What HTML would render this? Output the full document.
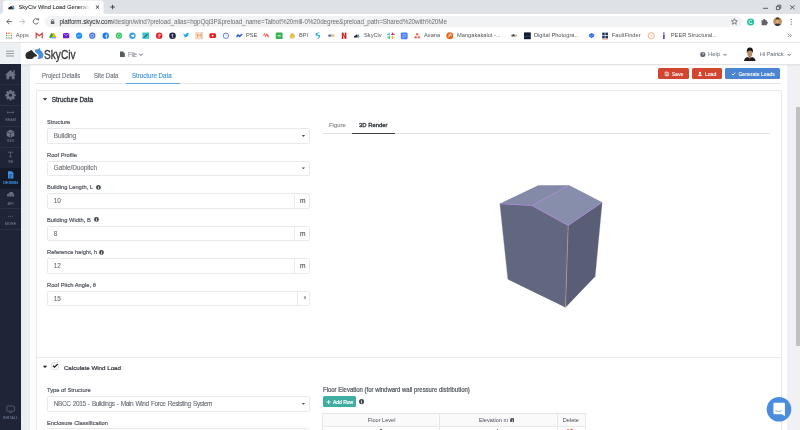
<!DOCTYPE html>
<html><head><meta charset="utf-8">
<style>
*{margin:0;padding:0;box-sizing:border-box}
html,body{width:800px;height:430px;overflow:hidden;background:#fff;font-family:"Liberation Sans",sans-serif}
.a{position:absolute}
.t{position:absolute;white-space:nowrap;line-height:1}
/* chrome */
#tabstrip{left:0;top:0;width:800px;height:14px;background:#dee1e6}
#tab{left:3.5px;top:0.5px;width:100px;height:13.5px;background:#fff;border-radius:4px 4px 0 0}
#toolbar{left:0;top:14px;width:800px;height:15px;background:#fff}
#omni{left:45px;top:16px;width:697px;height:11.3px;background:#f1f3f4;border-radius:6px}
#bmbar{left:0;top:29px;width:800px;height:14px;background:#fff;border-bottom:1px solid #e3e4e6}
.bm{position:absolute;top:32.5px;width:6.5px;height:6.5px;border-radius:50%}
.bmt{position:absolute;top:33px;font-size:5.7px;color:#505458;white-space:nowrap;line-height:1}
/* app */
#hdr{left:0;top:43px;width:800px;height:21px;background:#fff}
#hamb{left:0;top:43px;width:21px;height:21px;background:#eef1f4}
#side{left:0;top:64px;width:21px;height:366px;background:#1f2436}
#gutL{left:21px;top:64px;width:9px;height:366px;background:#eceef1}
#gutR{left:787px;top:64px;width:9px;height:366px;background:#eff1f4}
#sbar{left:796px;top:64px;width:4px;height:366px;background:#f1f1f1}
#thumb{left:796.4px;top:107.2px;width:3.6px;height:238.5px;background:#c1c1c1;border-radius:1px 0 0 1px}
.si{position:absolute;left:0;width:21px;border-bottom:1px solid #2a3044}
.sl{position:absolute;left:0;width:21px;text-align:center;font-size:3.85px;color:#5d6884;line-height:1;letter-spacing:-0.05px;-webkit-text-stroke:0.1px #5d6884}
.lab{position:absolute;font-size:6.15px;color:#50555c;white-space:nowrap;line-height:1;-webkit-text-stroke:0.2px #50555c;transform:scaleX(0.935);transform-origin:0 0}
.inp{position:absolute;left:47.2px;width:263.2px;height:15.6px;border:1px solid #e9eaec;border-radius:1.5px;background:#fff}
.inp span{position:absolute;left:5.6px;top:3.2px;font-size:6.5px;color:#6c7177;line-height:1;white-space:nowrap;letter-spacing:-0.12px;-webkit-text-stroke:0.12px #6c7177}
.caret{position:absolute;left:253.5px;top:5.6px;width:3.4px;height:1.9px;background:#4a4f56;clip-path:polygon(0 0,100% 0,50% 100%)}
.unit{position:absolute;left:246.1px;top:0;width:16.1px;height:13.6px;border-left:1px solid #e9eaec;font-size:6.6px;color:#4f545b;text-align:center;line-height:14.2px;-webkit-text-stroke:0.12px #4f545b}
.unit.deg{left:249.1px;width:13.1px;font-size:7px;line-height:15.5px;padding-left:1px}
.btn{position:absolute;top:67.5px;height:11.3px;border-radius:1.5px;color:#fff;font-size:5.2px;font-weight:bold;line-height:11.3px;white-space:nowrap}
</style></head><body>
<div id="root" style="position:absolute;left:0;top:0;width:800px;height:430px;will-change:transform">
<!-- CHROME TAB STRIP -->
<div id="tabstrip" class="a"></div>
<svg class="a" style="left:0;top:0" width="130" height="15" viewBox="0 0 130 15">
 <path d="M0 14 Q3 14 3 11 V3.5 Q3 0.5 6 0.5 H100.5 Q103.5 0.5 103.5 3.5 V11 Q103.5 14 106.5 14 Z" fill="#fff"/>
 <path d="M95.9 5.5 L99.1 8.7 M99.1 5.5 L95.9 8.7" stroke="#3c4043" stroke-width="1"/>
 <path d="M110.4 7 H114.8 M112.6 4.8 V9.2" stroke="#3c4043" stroke-width="0.95"/>
 <path d="M8.2 9.2 Q8 7 10 6.8 Q11 5.4 12.4 6.4 L13 9.2 Z" fill="#2b2b2b"/>
 <path d="M12.6 5.2 Q14.6 5.6 14.2 7.2 Q15.2 8.4 13.8 9.4 L12.4 9.4 Q13.6 8 12.6 7.2 Z" fill="#4a90d9"/>
</svg>
<div class="t" style="left:18.4px;top:5.3px;font-size:5.75px;color:#3c4043;-webkit-text-stroke:0.12px #3c4043;width:72px;overflow:hidden;-webkit-mask-image:linear-gradient(90deg,#000 84%,transparent)">SkyCiv Wind Load Generator</div>
<svg class="a" style="left:755px;top:0" width="45" height="14" viewBox="0 0 45 14">
 <path d="M8 8.3 H13" stroke="#3c4043" stroke-width="0.8"/>
 <path d="M21.4 6.6 H24.6 V9.6 H21.4 Z" fill="none" stroke="#3c4043" stroke-width="0.8"/>
 <path d="M22.6 6.4 V5.2 H25.8 V8.2 H24.8" fill="none" stroke="#3c4043" stroke-width="0.8"/>
 <path d="M35.2 5.4 L39.6 9.2 M39.6 5.4 L35.2 9.2" stroke="#3c4043" stroke-width="0.8"/>
</svg>
<!-- TOOLBAR -->
<div id="toolbar" class="a"></div>
<div id="omni" class="a"></div>
<svg class="a" style="left:0;top:14px" width="60" height="15" viewBox="0 0 60 15">
 <path d="M12 7.6 H6.8 M9.4 5 L6.8 7.6 L9.4 10.2" fill="none" stroke="#5f6368" stroke-width="0.95"/>
 <path d="M19.6 7.6 H24.8 M22.2 5 L24.8 7.6 L22.2 10.2" fill="none" stroke="#babdc1" stroke-width="0.95"/>
 <path d="M38.2 8.4 A2.6 2.6 0 1 1 37.6 5.6" fill="none" stroke="#5f6368" stroke-width="0.95"/>
 <path d="M36.6 4.6 H39 V7 Z" fill="#5f6368"/>
 <rect x="50.8" y="7.2" width="3.6" height="2.8" rx="0.4" fill="#5f6368"/>
 <path d="M51.6 7.4 V6.4 A1 1 0 0 1 53.6 6.4 V7.4" fill="none" stroke="#5f6368" stroke-width="0.75"/>
</svg>
<div class="t" style="left:59.4px;top:18.8px;font-size:6.3px;letter-spacing:-0.08px;color:#202124">platform.skyciv.com<span style="color:#6c7075">/design/wind?preload_alias=hgpQqi3P&amp;preload_name=Talbot%20mill-0%20degree&amp;preload_path=Shared%20with%20Me</span></div>
<svg class="a" style="left:725px;top:14px" width="75" height="15" viewBox="0 0 75 15">
 <path d="M9.4 4.6 L10.25 6.7 L12.4 6.8 L10.75 8.2 L11.3 10.3 L9.4 9.1 L7.5 10.3 L8.05 8.2 L6.4 6.8 L8.55 6.7 Z" fill="none" stroke="#5f6368" stroke-width="0.75" stroke-linejoin="round"/>
 <circle cx="25.6" cy="7.9" r="3.5" fill="#15c39a"/>
 <path d="M27 6.6 A1.8 1.8 0 1 0 27.2 9 H25.8" fill="none" stroke="#fff" stroke-width="0.8"/>
 <path d="M36.6 6.2 H38.2 Q38.2 4.8 39.2 4.8 Q40.2 4.8 40.2 6.2 H41.8 V7.8 Q43 7.8 43 8.8 Q43 9.8 41.8 9.8 V11.2 H36.6 Z" fill="#5f6368"/>
 <circle cx="52.6" cy="7.6" r="4.4" fill="#c09262"/>
 <path d="M49.6 10.6 Q52.6 8.6 55.6 10.6 Q54.4 12 52.6 12 Q50.8 12 49.6 10.6 Z" fill="#2a3040"/>
 <path d="M50.6 6.6 Q50.8 3.6 52.6 3.6 Q54.6 3.6 54.6 6.6 Q54.2 5 52.6 5.2 Q51 5 50.6 6.6 Z" fill="#3a2a20"/>
 <ellipse cx="52.6" cy="7.6" rx="1.6" ry="2" fill="#d8a880"/>
 <circle cx="66.2" cy="5.4" r="0.6" fill="#5f6368"/><circle cx="66.2" cy="7.8" r="0.6" fill="#5f6368"/><circle cx="66.2" cy="10.2" r="0.6" fill="#5f6368"/>
</svg>
<!-- BOOKMARKS -->
<div id="bmbar" class="a"></div>
<svg class="a" style="left:0;top:29px" width="800" height="14" viewBox="0 29 800 14">
 <g>
  <circle cx="6.6" cy="33.2" r="0.75" fill="#ea4335"/><circle cx="9" cy="33.2" r="0.75" fill="#ea4335"/><circle cx="11.4" cy="33.2" r="0.75" fill="#fbbc04"/>
  <circle cx="6.6" cy="35.6" r="0.75" fill="#34a853"/><circle cx="9" cy="35.6" r="0.75" fill="#fbbc04"/><circle cx="11.4" cy="35.6" r="0.75" fill="#4285f4"/>
  <circle cx="6.6" cy="38" r="0.75" fill="#4285f4"/><circle cx="9" cy="38" r="0.75" fill="#34a853"/><circle cx="11.4" cy="38" r="0.75" fill="#ea4335"/>
 </g>
 <path d="M36.2 38.4 V33.2 L39.2 35.8 L42.2 33.2 V38.4" fill="none" stroke="#c5443a" stroke-width="1.2"/>
 <path d="M49.2 37.2 L51.6 33 H54 L56.4 37.2 Z" fill="#f4b400"/>
 <path d="M49.2 37.2 L51.6 33 L52.8 35 L51 38.3 Z" fill="#0f9d58"/>
 <path d="M51 38.3 L52.2 37.2 H56.4 L55.8 38.3 Z" fill="#4285f4"/>
 <rect x="63" y="33" width="6.2" height="5.2" rx="0.6" fill="#6b1fd8"/><path d="M63.2 33.4 L66.1 35.6 L69 33.4" fill="none" stroke="#fff" stroke-width="0.5"/>
 <circle cx="79.1" cy="35.7" r="3.1" fill="#1c8bf5"/><path d="M77.3 36.6 L78.6 35 L79.6 35.8 L80.9 34.6" fill="none" stroke="#fff" stroke-width="0.55"/>
 <circle cx="92.3" cy="35.7" r="3.1" fill="#3d6ee6"/><rect x="90.9" y="34.3" width="2.8" height="2.8" rx="0.4" fill="none" stroke="#fff" stroke-width="0.55"/>
 <circle cx="105.7" cy="35.7" r="3.2" fill="#1877f2"/><path d="M106.3 38.9 V35.4 Q106.3 34.2 107.4 34.2 M105 36 H107.4" fill="none" stroke="#fff" stroke-width="0.75"/>
 <circle cx="118.9" cy="35.7" r="3.1" fill="#2cc45e"/><circle cx="118.9" cy="35.7" r="1.6" fill="none" stroke="#fff" stroke-width="0.5"/>
 <circle cx="132.4" cy="35.7" r="3.2" fill="#3aa0e2"/><path d="M130.6 35.6 L134.4 34.2 L133.6 37.4 Z" fill="#fff"/>
 <rect x="142.4" y="32.5" width="6.6" height="6.4" fill="#3cc6ce"/><path d="M143.8 37.8 L147.8 33.8" stroke="#222" stroke-width="0.9"/>
 <circle cx="159.2" cy="35.7" r="3.2" fill="#e0262d"/><path d="M158.8 38.4 L159.6 34.6 M158.4 35.8 Q158.6 33.6 160.2 34.2 Q161 35.4 159.4 36.4" fill="none" stroke="#fff" stroke-width="0.55"/>
 <circle cx="172.5" cy="35.7" r="3.3" fill="#1b2442"/><path d="M172.4 33.8 V37 Q172.4 37.8 173.4 37.6 M171.4 35 H173.4" fill="none" stroke="#fff" stroke-width="0.65"/>
 <path d="M183.2 37.4 Q185 38 186.8 36.8 Q188.6 35.4 188.6 33.6 L189.4 33 L188.4 33.2 Q187.4 32.4 186.4 33.4 Q186 34 186.2 34.6 Q184.4 34.6 183.4 33.4 Q183 35 184.4 35.6 L183.8 35.6 Q184 36.6 185.2 36.8 Q184.4 37.4 183.2 37.4 Z" fill="#1da1f2"/>
 <rect x="195.8" y="32.4" width="7" height="6.6" fill="#f7e3d2" stroke="#e8b896" stroke-width="0.4"/><path d="M197.4 37.8 V33.8 L199.3 35.8 L201.2 33.8 V37.8" fill="none" stroke="#e07a30" stroke-width="0.6"/>
 <rect x="209.4" y="33.3" width="6.6" height="4.8" rx="1.3" fill="#e62117"/><path d="M211.9 34.6 L214 35.7 L211.9 36.8 Z" fill="#fff"/>
 <circle cx="225.9" cy="35.7" r="2.7" fill="none" stroke="#5a72b6" stroke-width="0.9"/><path d="M224.6 34.6 Q226.8 34 227.4 36.4" fill="none" stroke="#a8b4d8" stroke-width="0.6"/>
 <path d="M236 36.2 L238 33.8 L239.6 35.2 L241.8 33.4 L242.6 34.6 L239.8 37.6 L238.2 36.2 L236.8 37.6 Z" fill="#2f67c9"/>
 <path d="M263 35.8 L264.6 33.4 L265.4 36.8 L266.6 34.2 L267.4 36 H269.2 M266.8 33.4 L268.6 37.6" fill="none" stroke="#e03838" stroke-width="0.7"/>
 <rect x="275.8" y="32.4" width="6.8" height="6.6" rx="0.5" fill="#38b456"/><rect x="277.6" y="35" width="3.2" height="1.4" fill="#a8e6b8"/>
 <path d="M290 38.4 Q289.4 35.6 290.6 33.8 Q292 32.2 293.4 33.4 Q295.6 35 295 37.6 Q293.6 39 290 38.4 Z" fill="#e8c45a"/><path d="M291.6 35 Q292.6 34.4 293.4 35.6" fill="none" stroke="#b08a20" stroke-width="0.5"/>
 <path d="M317.8 32.6 Q315 33.4 315.6 35.6 Q318.8 35.6 318.8 37 Q318.6 38.4 315.6 39 Q319.8 38.6 320.2 36.2 Q320 34.6 317 34.6 Q317 33.4 320 32.8 Z" fill="#22a8d8"/>
 <rect x="328" y="34.3" width="6.4" height="2.8" fill="#c6cdf0"/><rect x="331.6" y="34.6" width="2.4" height="2" fill="#f2d040"/><rect x="328.6" y="34.8" width="2.4" height="1.6" fill="#4a5ab8"/>
 <path d="M341.8 39 V32.4 H343.3 L344.8 36.4 V32.4 H346.4 V39 H344.9 L343.3 35 V39 Z" fill="#d81f26"/>
 <path d="M354 37.6 Q353.6 35.8 355.4 35.6 Q356 34.2 357.4 34.8 L357.8 37.6 Z" fill="#2b2b2b"/><path d="M357.6 34 Q359.4 34.4 359.2 35.8 Q360.2 37 358.6 37.8 L357.8 37.8 Q358.8 36.6 357.8 35.8 Z" fill="#4a90d9"/>
 <g stroke-width="1.1" stroke-linecap="round"><path d="M389.2 33 V35.2" stroke="#36c5f0"/><path d="M387.6 37 H389.8" stroke="#2eb67d"/><path d="M392.4 38.4 V36.2" stroke="#ecb22e"/><path d="M394 34.4 H391.8" stroke="#e01e5a"/><path d="M387.6 34.4 H389" stroke="#36c5f0"/><path d="M392.4 33 V34.4" stroke="#e01e5a"/><path d="M394 37 H392.6" stroke="#ecb22e"/><path d="M389.2 38.4 V37" stroke="#2eb67d"/></g>
 <rect x="400.8" y="32.4" width="6.8" height="6.8" rx="1.2" fill="#4d7ef2"/><path d="M402.2 34.6 H406.2 M402.2 36.2 H406.2 M402.2 37.8 H404.6" stroke="#c8d6ff" stroke-width="0.5"/>
 <circle cx="417.2" cy="34.2" r="1.25" fill="#f06a6a"/><circle cx="415.6" cy="37.2" r="1.25" fill="#f06a6a"/><circle cx="418.8" cy="37.2" r="1.25" fill="#f06a6a"/>
 <circle cx="449.8" cy="35.7" r="3.5" fill="#e26a1e"/><path d="M448.2 37.6 L450.4 33.6 L451.4 35.6 M448.6 35.2 H451.6" fill="none" stroke="#fff" stroke-width="0.6"/>
 <rect x="511" y="34.4" width="6.2" height="2.4" rx="0.3" fill="#fff"/><path d="M511.6 34.6 V36.6 M512.6 34.6 V36.6 L513.4 35.6 L514.2 36.6 V34.6 M515 34.6 V36.6 M516.2 34.6 V36.6" stroke="#333" stroke-width="0.5"/>
 <rect x="524" y="32.4" width="6.8" height="6.8" fill="#0f1b30"/><path d="M524.4 37 Q527 35.4 530.4 36.2" fill="none" stroke="#3a5a8a" stroke-width="0.8"/>
 <path d="M588.8 34.6 L591.6 33 L594.4 34.6 L594 36.6 L591.6 38.2 L589.2 36.6 Z" fill="#3d6ee8"/><path d="M589.6 34.8 L591.6 36 L593.6 34.8" fill="none" stroke="#9ab8ff" stroke-width="0.4"/>
 <rect x="602.2" y="32.6" width="2.6" height="2.6" fill="#233a5e"/><rect x="605.4" y="32.6" width="2.6" height="2.6" fill="#233a5e"/><rect x="602.2" y="35.8" width="2.6" height="2.6" fill="#233a5e"/><rect x="605.4" y="35.8" width="2.6" height="2.6" fill="#233a5e"/><rect x="602.2" y="38.8" width="5.8" height="0.5" fill="#e04a4a"/>
 <circle cx="651.2" cy="35.7" r="3.1" fill="none" stroke="#f0a06a" stroke-width="0.8"/><path d="M650.6 34.2 L652 35.8 L650.8 37.2" fill="none" stroke="#f0a06a" stroke-width="0.6"/>
 <rect x="663.2" y="34.4" width="1.4" height="4.6" fill="#3c1ec8"/><circle cx="663.9" cy="33" r="0.75" fill="#3c1ec8"/>
 <path d="M787.8 33.8 L789.4 35.4 L787.8 37 M790 33.8 L791.6 35.4 L790 37" fill="none" stroke="#5f6368" stroke-width="0.65"/>
</svg>
<div class="bmt" style="left:15.8px">Apps</div>
<div class="bmt" style="left:246px">PSE</div>
<div class="bmt" style="left:298.9px">BPI</div>
<div class="bmt" style="left:364px">SkyCiv</div>
<div class="bmt" style="left:424px">Asana</div>
<div class="bmt" style="left:457px">Mangakakalot -...</div>
<div class="bmt" style="left:534px">Digital Photogra...</div>
<div class="bmt" style="left:611.8px">FaultFinder</div>
<div class="bmt" style="left:670.8px">PEER Structural...</div>

<!-- APP HEADER -->
<div id="hdr" class="a"></div>
<div id="hamb" class="a"></div>
<svg class="a" style="left:0;top:43px" width="150" height="21" viewBox="0 43 150 21">
 <path d="M6 51.2 H14 M6 53.6 H14 M6 56 H14" stroke="#767c86" stroke-width="0.75"/>
 <path d="M25.4 55.6 Q25.5 52.4 28.6 51.4 L31.2 50 Q32.6 50.4 33.2 52 L37.2 55.6 Q36.6 56.8 35.2 56.6 L33.9 56.9 Q33.4 58.9 31.2 58.9 L27.6 58.9 Q25.4 58.5 25.4 55.6 Z" fill="#2b2b2b"/>
 <path d="M34.8 50.4 Q35.4 49 37.4 49.4 L39.4 48 Q40.4 49 40.3 50.3 Q43.6 52.4 43.4 55.6 Q43.2 58.9 39.2 58.9 L37.6 58.9 Q38.8 57.4 38.6 55.6 Q38.2 53.8 36.4 53 Q34.8 52.2 34.8 50.4 Z" fill="#4a90d9"/>
 <path d="M120 51.6 H123 L124.8 53.4 V57.1 H120 Z" fill="#555b63"/>
 <path d="M139.3 53.8 L141 55.5 L142.7 53.8" fill="none" stroke="#5c626a" stroke-width="1"/>
</svg>
<div class="t" style="left:44px;top:48px;font-size:13px;color:#383838;-webkit-text-stroke:0.35px #383838;transform:scaleX(0.78);transform-origin:0 0">SkyCiv</div>
<div class="t" style="left:127.9px;top:52px;font-size:6.3px;color:#7d838b;letter-spacing:-0.35px">File</div>
<svg class="a" style="left:695px;top:46px" width="100" height="16" viewBox="695 46 100 16">
 <circle cx="702.8" cy="54.4" r="2.55" fill="#5c636d"/>
 <path d="M701.9 53.6 Q701.9 52.6 702.8 52.6 Q703.8 52.6 703.8 53.5 Q703.8 54.2 702.9 54.6 V55.2" fill="none" stroke="#fff" stroke-width="0.6"/>
 <circle cx="702.9" cy="56.1" r="0.35" fill="#fff"/>
 <path d="M723.4 53.9 L725 55.5 L726.6 53.9" fill="none" stroke="#5c626a" stroke-width="1"/>
 <path d="M787.6 53.9 L789.2 55.5 L790.8 53.9" fill="none" stroke="#5c626a" stroke-width="1"/>
</svg>
<div class="t" style="left:708px;top:52.2px;font-size:5.8px;color:#80868d;-webkit-text-stroke:0.1px #80868d">Help</div>
<svg class="a" style="left:740px;top:45px" width="20" height="18" viewBox="740 45 20 18">
 <path d="M744 61 Q744.5 57.6 747.6 57 L749.8 58.2 L752 57 Q755 57.6 755.6 61 Z" fill="#1d1a1c"/>
 <path d="M749 57.4 L749.8 60.6 L750.6 57.4 Z" fill="#8a3030"/>
 <ellipse cx="749.8" cy="53.6" rx="2.5" ry="3.3" fill="#b98a6a"/>
 <path d="M746.8 53 Q746.4 47.6 749.9 47.6 Q753.4 47.6 753 53 Q752.4 50.6 749.9 50.4 Q747.4 50.6 746.8 53 Z" fill="#1a1414"/>
 <rect x="748.6" y="56.2" width="2.4" height="1.4" fill="#a07058"/>
</svg>
<div class="t" style="left:759.8px;top:52.2px;font-size:5.8px;color:#80868d;letter-spacing:-0.1px;-webkit-text-stroke:0.1px #80868d">Hi Patrick</div>
<!-- SIDEBAR -->
<div id="side" class="a"></div>
<div class="a" style="left:0;top:83.5px;width:21px;height:0.7px;background:#2b3145"></div>
<div class="a" style="left:0;top:104.5px;width:21px;height:0.7px;background:#2b3145"></div>
<div class="a" style="left:0;top:125.5px;width:21px;height:0.7px;background:#2b3145"></div>
<div class="a" style="left:0;top:146.5px;width:21px;height:0.7px;background:#2b3145"></div>
<div class="a" style="left:0;top:167.5px;width:21px;height:0.7px;background:#2b3145"></div>
<div class="a" style="left:0;top:188.0px;width:21px;height:0.7px;background:#2b3145"></div>
<div class="a" style="left:0;top:208.0px;width:21px;height:0.7px;background:#2b3145"></div>
<div class="a" style="left:0;top:228.5px;width:21px;height:0.7px;background:#2b3145"></div>
<div class="a" style="left:0;top:168px;width:21px;height:20.5px;background:#151a29"></div>
<svg class="a" style="left:0;top:64px" width="21" height="170" viewBox="0 0 21 170">
 <!-- home -->
 <path d="M5 11 L10.5 6 L16 11 L14.6 11 L14.6 15.2 L11.8 15.2 L11.8 12.6 L9.2 12.6 L9.2 15.2 L6.4 15.2 L6.4 11 Z" fill="#6d7384"/>
 <rect x="13.4" y="6" width="1.3" height="3" fill="#6d7384"/>
 <!-- gear -->
 <g transform="translate(10.5,31.2)">
  <circle r="3.9" fill="#6d7384"/>
  <g fill="#6d7384">
   <rect x="-1.1" y="-5.2" width="2.2" height="10.4"/>
   <rect x="-5.2" y="-1.1" width="10.4" height="2.2"/>
   <rect x="-1.1" y="-5.2" width="2.2" height="10.4" transform="rotate(45)"/>
   <rect x="-1.1" y="-5.2" width="2.2" height="10.4" transform="rotate(-45)"/>
  </g>
  <circle r="1.6" fill="#1f2436"/>
 </g>
 <!-- beam arrow -->
 <path d="M7.2 48.4 H13.8" stroke="#6d7384" stroke-width="0.7"/>
 <path d="M8.2 47.3 L7 48.4 L8.2 49.5 M12.8 47.3 L14 48.4 L12.8 49.5" stroke="#6d7384" stroke-width="0.6" fill="none"/>
 <!-- cube -->
 <path d="M10.5 65.8 L14.3 67.6 L14.3 72 L10.5 73.8 L6.7 72 L6.7 67.6 Z" fill="#6d7384"/>
 <path d="M6.7 67.6 L10.5 69.4 L14.3 67.6 M10.5 69.4 V73.8" stroke="#1f2436" stroke-width="0.6" fill="none"/>
 <!-- T -->
 <path d="M7.8 88.2 H13.2 M10.5 88.2 V92.8 M9.3 92.8 H11.7" stroke="#6d7384" stroke-width="0.7" fill="none"/>
 <!-- design doc -->
 <path d="M8 107.2 H11.6 L13.4 109 V114.6 H8 Z" fill="#3b8fe5"/>
 <path d="M9 110.6 H12.2 M9 112 H12.2 M9 113.3 H11" stroke="#151a29" stroke-width="0.45"/>
 <!-- cloud api -->
 <path d="M7 131.6 Q7 129.4 9 129.6 Q9.8 127.4 11.8 128 Q13.8 128.4 13.6 130.2 Q14.8 130.8 14 132.4 H7.6 Z" fill="#6d7384"/>
 <path d="M9.6 130.4 L8.6 131.1 L9.6 131.8 M11.4 130.4 L12.4 131.1 L11.4 131.8" stroke="#1f2436" stroke-width="0.5" fill="none"/>
 <!-- dots -->
 <circle cx="8.7" cy="152.3" r="0.55" fill="#6d7384"/><circle cx="10.5" cy="152.3" r="0.55" fill="#6d7384"/><circle cx="12.3" cy="152.3" r="0.55" fill="#6d7384"/>
</svg>
<div class="sl" style="top:119.40px;color:#6d7384">BEAM</div>
<div class="sl" style="top:139.80px;color:#6d7384">S3D</div>
<div class="sl" style="top:160.60px;color:#6d7384">SB</div>
<div class="sl" style="top:181.80px;color:#3f95ee;-webkit-text-stroke:0.15px #3f95ee">DESIGN</div>
<div class="sl" style="top:202.60px;color:#6d7384">API</div>
<div class="sl" style="top:223.30px;color:#6d7384">MORE</div>
<svg class="a" style="left:0;top:400px" width="21" height="30" viewBox="0 0 21 30">
 <rect x="6.8" y="6" width="7.6" height="5.2" rx="0.6" fill="none" stroke="#5d6478" stroke-width="0.8"/>
 <path d="M9.2 12.6 H12" stroke="#5d6478" stroke-width="0.7"/>
</svg>
<div class="sl" style="top:415.60px;color:#66718c;font-size:4px;-webkit-text-stroke:0.1px #66718c">INSTALL</div>
<div id="gutL" class="a"></div>
<div id="gutR" class="a"></div>
<div id="sbar" class="a"></div>
<div id="thumb" class="a"></div>
<!-- CONTENT -->

<div class="a" style="left:30px;top:64px;width:757px;height:366px;background:#fff"></div>
<div class="t" style="left:42px;top:72.9px;font-size:6.6px;transform:scaleX(0.9);transform-origin:0 0;color:#6d7279;-webkit-text-stroke:0.15px #6d7279">Project Details</div>
<div class="t" style="left:94.4px;top:72.9px;font-size:6.6px;transform:scaleX(0.9);transform-origin:0 0;color:#6d7279;-webkit-text-stroke:0.15px #6d7279">Site Data</div>
<div class="t" style="left:132.4px;top:72.9px;font-size:6.6px;transform:scaleX(0.93);transform-origin:0 0;color:#4597df;-webkit-text-stroke:0.15px #4597df">Structure Data</div>
<div class="a" style="left:35px;top:83px;width:746px;height:1px;background:#e6e8eb"></div>
<div class="a" style="left:125.6px;top:82.6px;width:54.4px;height:1.2px;background:#5aa8ea"></div>
<div class="btn" style="left:658.1px;width:30.6px;background:#d3452f"></div>
<div class="btn" style="left:691.7px;width:30.5px;background:#d3452f"></div>
<div class="btn" style="left:725px;width:55px;background:#4a84d2"></div>
<svg class="a" style="left:660px;top:68px" width="120" height="11" viewBox="660 68 120 11">
 <path d="M665.1 72 H667.6 L668.6 73 V75.8 H665.1 Z" fill="none" stroke="#fff" stroke-width="0.6"/>
 <path d="M665.9 72 V73.2 H667.4 V72" fill="none" stroke="#fff" stroke-width="0.5"/>
 <rect x="665.8" y="74.4" width="2.1" height="1.2" fill="#fff"/>
 <circle cx="700" cy="72.9" r="1.05" fill="#fff"/>
 <path d="M698 75.9 Q698.2 74.2 700 74.2 Q701.8 74.2 702 75.9 Z" fill="#fff"/>
 <path d="M731.9 73.9 L733.1 75.1 L735.3 72.6" fill="none" stroke="#fff" stroke-width="0.85"/>
</svg>
<div class="t" style="left:671.7px;top:71.6px;font-size:5.15px;color:#fff;-webkit-text-stroke:0.1px #fff">Save</div>
<div class="t" style="left:704.9px;top:71.6px;font-size:5.15px;color:#fff;-webkit-text-stroke:0.1px #fff">Load</div>
<div class="t" style="left:738.4px;top:71.6px;font-size:5.15px;color:#fff;-webkit-text-stroke:0.1px #fff;letter-spacing:-0.03px">Generate Loads</div>
<!-- panel -->
<div class="a" style="left:35.5px;top:89.5px;width:746px;height:360px;border:1px solid #e7e9ec;border-radius:2px"></div>
<svg class="a" style="left:40px;top:95px" width="10" height="8"><path d="M3.3 3.4 H6.7 L5 5.2 Z" fill="#1e1e1e" stroke="#1e1e1e" stroke-width="0.5" stroke-linejoin="round"/></svg>
<div class="t" style="left:51.8px;top:96.5px;font-size:6.4px;color:#2f343c;-webkit-text-stroke:0.28px #2f343c">Structure Data</div>

<div class="lab" style="left:47.15px;top:119.20px">Structure</div>
<div class="inp" style="top:128.40px"><span style="top:3.45px">Building</span><i class="caret"></i></div>
<div class="lab" style="left:47.15px;top:151.67px">Roof Profile</div>
<div class="inp" style="top:160.85px"><span style="top:3.60px">Gable/Duopitch</span><i class="caret"></i></div>
<div class="lab" style="left:47.15px;top:184.14px">Building Length, L</div>
<svg style="position:absolute;left:95.6px;top:184.65px" width="5" height="5" viewBox="0 0 5 5"><circle cx="2.45" cy="2.45" r="2.4" fill="#454b53"/><rect x="2.05" y="2.1" width="0.8" height="1.8" fill="#fff"/><circle cx="2.45" cy="1.3" r="0.42" fill="#fff"/></svg>
<div class="inp" style="top:193.30px"><span style="top:3.75px">10</span><div class="unit">m</div></div>
<div class="lab" style="left:47.15px;top:216.61px">Building Width, B</div>
<svg style="position:absolute;left:93.8px;top:217.05px" width="5" height="5" viewBox="0 0 5 5"><circle cx="2.45" cy="2.45" r="2.4" fill="#454b53"/><rect x="2.05" y="2.1" width="0.8" height="1.8" fill="#fff"/><circle cx="2.45" cy="1.3" r="0.42" fill="#fff"/></svg>
<div class="inp" style="top:225.75px"><span style="top:3.90px">8</span><div class="unit">m</div></div>
<div class="lab" style="left:47.15px;top:249.08px">Reference height, h</div>
<svg style="position:absolute;left:98.9px;top:249.75px" width="5" height="5" viewBox="0 0 5 5"><circle cx="2.45" cy="2.45" r="2.4" fill="#454b53"/><rect x="2.05" y="2.1" width="0.8" height="1.8" fill="#fff"/><circle cx="2.45" cy="1.3" r="0.42" fill="#fff"/></svg>
<div class="inp" style="top:258.20px"><span style="top:4.05px">12</span><div class="unit">m</div></div>
<div class="lab" style="left:47.15px;top:281.55px">Roof Pitch Angle, &#x3b8;</div>
<div class="inp" style="top:290.65px"><span style="top:4.20px">15</span><div class="unit deg">&#xb0;</div></div>

<!-- right: tabs -->
<div class="t" style="left:329px;top:122.8px;font-size:5.9px;color:#7f858c;-webkit-text-stroke:0.1px #7f858c">Figure</div>
<div class="t" style="left:359px;top:123px;font-size:5.9px;color:#2f343c;-webkit-text-stroke:0.3px #2f343c">3D Render</div>
<div class="a" style="left:322.5px;top:133px;width:447px;height:1px;background:#dfe1e4"></div>
<div class="a" style="left:352.2px;top:132.6px;width:43px;height:1.3px;background:#3b3f46"></div>

<!-- 3D box -->
<svg class="a" style="left:480px;top:170px" width="140" height="150" viewBox="480 170 140 150">
 <polygon points="499.8,203.7 532,205.6 568.2,225.5 565.5,307.5 507.8,279.3" fill="#61677e"/>
 <polygon points="568.2,225.5 602.2,202.3 595.2,276.4 565.5,307.5" fill="#595e76"/>
 <polygon points="499.8,203.7 538.4,185.2 569.2,185.2 532,205.6" fill="#828aa7"/>
 <polygon points="532,205.6 569.2,185.2 602.2,202.3 568.2,225.5" fill="#868eab"/>
 <polyline points="499.8,203.7 532,205.6 568.2,225.5 602.2,202.3" fill="none" stroke="#ae80d8" stroke-width="0.75"/>
 <line x1="532" y1="205.6" x2="569.2" y2="185.2" stroke="#ae80d8" stroke-width="0.7"/>
 <line x1="568.2" y1="225.5" x2="565.5" y2="307.5" stroke="#c29c8e" stroke-width="0.6"/>
 <line x1="499.8" y1="203.7" x2="507.8" y2="279.3" stroke="#a890a8" stroke-width="0.35"/>
 <line x1="602.2" y1="202.3" x2="595.2" y2="276.4" stroke="#9c88b8" stroke-width="0.3"/>
</svg>

<!-- section 2 -->
<div class="a" style="left:36px;top:357px;width:745px;height:1px;background:#e7e9ec"></div>
<svg class="a" style="left:40px;top:363px" width="10" height="8"><path d="M3.3 2.9 H6.7 L5 4.7 Z" fill="#1e1e1e" stroke="#1e1e1e" stroke-width="0.5" stroke-linejoin="round"/></svg>
<svg class="a" style="left:50px;top:361px" width="12" height="10" viewBox="50 361 12 10"><rect x="51.75" y="362.75" width="6.8" height="6.6" rx="1" fill="#fff" stroke="#d6d6d6" stroke-width="0.8"/><path d="M52.9 365.6 L54.5 367.2 L57.7 364.1" fill="none" stroke="#111" stroke-width="1.25"/></svg>
<div class="t" style="left:63.9px;top:364.9px;font-size:6.2px;color:#2f343c;-webkit-text-stroke:0.2px #2f343c">Calculate Wind Load</div>
<div class="lab" style="left:47.15px;top:387.20px">Type of Structure</div>
<div class="inp" style="top:396.3px"><span style="top:4.1px;letter-spacing:-0.42px;word-spacing:0.9px">NBCC 2015 - Buildings - Main Wind Force Resisting System</span><i class="caret"></i></div>
<div class="lab" style="left:47.15px;top:419.60px">Enclosure Classification</div>
<div class="inp" style="top:428px"></div>

<div class="lab" style="left:322.75px;top:386.90px;font-size:6.4px">Floor Elevation (for windward wall pressure distribution)</div>
<div class="a" style="left:322.5px;top:396px;width:33px;height:11.3px;background:#3fada2;border-radius:1.5px"></div>
<svg class="a" style="left:326px;top:398px" width="6" height="8" viewBox="326 398 6 8"><path d="M328.6 399.9 V404.1 M326.5 402 H330.7" stroke="#fff" stroke-width="0.9"/></svg>
<div class="t" style="left:332.9px;top:399.6px;font-size:5px;color:#fff;-webkit-text-stroke:0.2px #fff">Add Row</div>
<svg class="a" style="left:358.8px;top:399.4px" width="5.2" height="5.2" viewBox="0 0 5 5"><circle cx="2.5" cy="2.5" r="2.5" fill="#454b53"/><rect x="2.1" y="2.15" width="0.8" height="1.85" fill="#fff"/><circle cx="2.5" cy="1.3" r="0.43" fill="#fff"/></svg>
<div class="a" style="left:322px;top:413px;width:264px;height:20px;border:1px solid #e6e8ea;background:#fafafa"></div>
<div class="a" style="left:322px;top:426.2px;width:264px;height:1px;background:#e6e8ea"></div>
<div class="a" style="left:323px;top:427.2px;width:262px;height:3px;background:#fff"></div>
<div class="a" style="left:438.9px;top:413px;width:1px;height:17px;background:#e6e8ea"></div>
<div class="a" style="left:556.9px;top:413px;width:1px;height:17px;background:#e6e8ea"></div>
<div class="t" style="left:367.8px;top:417.5px;font-size:5.6px;color:#4a4f58">Floor Level</div>
<div class="t" style="left:478.9px;top:417.5px;font-size:5.6px;color:#4a4f58">Elevation m <svg style="display:inline-block;vertical-align:-0.5px" width="4.6" height="4.6" viewBox="0 0 5 5"><circle cx="2.5" cy="2.5" r="2.5" fill="#454b53"/><rect x="2.1" y="2.15" width="0.8" height="1.85" fill="#fff"/><circle cx="2.5" cy="1.3" r="0.43" fill="#fff"/></svg></div>
<div class="t" style="left:562.8px;top:417.5px;font-size:5.6px;color:#4a4f58">Delete</div>
<div class="a" style="left:567.2px;top:428.6px;width:2.2px;height:1.4px;background:#e05a50;border-radius:1px 1px 0 0"></div><div class="a" style="left:570.4px;top:428.6px;width:2.2px;height:1.4px;background:#e05a50;border-radius:1px 1px 0 0"></div>
<div class="a" style="left:380.3px;top:428.8px;width:1.6px;height:1.2px;background:#6a6f76"></div>
<div class="a" style="left:497px;top:429px;width:1.4px;height:1px;background:#6a6f76"></div>

<div class="a" style="left:21px;top:64px;width:779px;height:1px;background:#e4e4e4;box-shadow:0 1px 1.5px rgba(0,0,0,0.05)"></div>
<!-- chat bubble -->
<svg class="a" style="left:760px;top:390px" width="40" height="40" viewBox="760 390 40 40">
 <circle cx="779" cy="409.2" r="12.3" fill="#4a8ddf"/>
 <path d="M774.4 402.7 H784 Q784.9 402.7 784.9 403.6 V416.2 L782 414.2 H774.4 Q773.4 414.2 773.4 413.2 V403.7 Q773.4 402.7 774.4 402.7 Z" fill="#fff"/>
 <path d="M775.4 410.6 Q778.6 412.6 781.8 410.6" fill="none" stroke="#4a8ddf" stroke-width="0.7"/>
</svg>
</div>
</body></html>
